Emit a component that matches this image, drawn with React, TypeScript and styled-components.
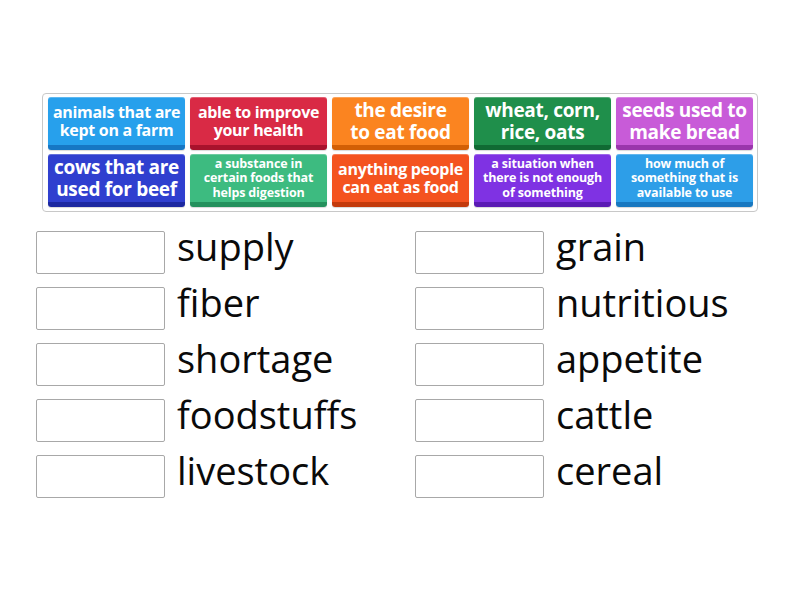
import React from "react";
import styled, { createGlobalStyle } from "styled-components";

const tiles = [
  { id: 1, lines: ["animals that are", "kept on a farm"], color: "#27a0ec", dark: "#1677c4", size: 16 },
  { id: 2, lines: ["able to improve", "your health"], color: "#d92a45", dark: "#a8122c", size: 16 },
  { id: 3, lines: ["the desire", "to eat food"], color: "#fb8420", dark: "#d25f05", size: 19 },
  { id: 4, lines: ["wheat, corn,", "rice, oats"], color: "#1f8f4b", dark: "#106a33", size: 19 },
  { id: 5, lines: ["seeds used to", "make bread"], color: "#c85bd8", dark: "#9a35ac", size: 19 },
  { id: 6, lines: ["cows that are", "used for beef"], color: "#2f3fcf", dark: "#1c28a0", size: 19 },
  { id: 7, lines: ["a substance in", "certain foods that", "helps digestion"], color: "#3dbb80", dark: "#24915d", size: 12.5 },
  { id: 8, lines: ["anything people", "can eat as food"], color: "#f4531f", dark: "#c33a0c", size: 16 },
  { id: 9, lines: ["a situation when", "there is not enough", "of something"], color: "#7f32e3", dark: "#5a1bb4", size: 12.5 },
  { id: 10, lines: ["how much of", "something that is", "available to use"], color: "#2d9ee8", dark: "#1878c0", size: 12.5 },
];

const words = [
  "supply",
  "grain",
  "fiber",
  "nutritious",
  "shortage",
  "appetite",
  "foodstuffs",
  "cattle",
  "livestock",
  "cereal",
];

const GlobalStyle = createGlobalStyle`
  body {
    margin: 0;
    background: #ffffff;
    font-family: "Open Sans", "Noto Sans", sans-serif;
  }
`;

const Page = styled.div`
  width: 800px;
  height: 600px;
  padding-top: 93px;
  box-sizing: border-box;
`;

const Bank = styled.div`
  width: 716px;
  margin: 0 auto;
  box-sizing: border-box;
  border: 1px solid #c8c8c8;
  border-radius: 4px;
  padding: 3px 5px 4px 5px;
  display: grid;
  grid-template-columns: repeat(5, 137px);
  grid-auto-rows: 53px;
  column-gap: 5px;
  row-gap: 4px;
`;

const Tile = styled.div<{ $color: string; $dark: string; $size: number }>`
  box-sizing: border-box;
  display: flex;
  flex-direction: column;
  align-items: center;
  justify-content: center;
  text-align: center;
  padding: 0 2px 4px;
  border-radius: 3px;
  background: linear-gradient(
    to bottom,
    ${({ $color }) => $color} 0%,
    ${({ $color }) => $color} 90%,
    ${({ $dark }) => $dark} 90%,
    ${({ $dark }) => $dark} 100%
  );
  box-shadow: inset 0 1px 0 rgba(255, 255, 255, 0.25), 0 1px 1px rgba(0, 0, 0, 0.15);
  color: #ffffff;
  font-weight: 700;
  font-size: ${({ $size }) => $size}px;
  line-height: ${({ $size }) => ($size < 14 ? 1.16 : 1.12)};
  letter-spacing: ${({ $size }) => ($size < 14 ? "-0.15px" : "-0.3px")};
  white-space: nowrap;
`;

const Line = styled.span`
  display: block;
`;

const Answers = styled.div`
  display: grid;
  grid-template-columns: 379px 379px;
  grid-auto-rows: 56px;
  padding: 19px 0 0 36px;
`;

const Row = styled.div`
  display: flex;
  align-items: center;
  height: 43px;
`;

const Slot = styled.div`
  width: 129px;
  height: 43px;
  box-sizing: border-box;
  border: 1px solid #a8a8a8;
  border-radius: 2px;
  background: #ffffff;
  flex-shrink: 0;
`;

const Word = styled.span`
  margin-left: 12px;
  font-size: 38px;
  color: #0a0a0a;
  line-height: 1;
  margin-top: -13px;
`;

export default function App() {
  return (
    <Page>
      <GlobalStyle />
      <Bank>
        {tiles.map((t) => (
          <Tile key={t.id} $color={t.color} $dark={t.dark} $size={t.size}>
            {t.lines.map((l) => (
              <Line key={l}>{l}</Line>
            ))}
          </Tile>
        ))}
      </Bank>
      <Answers>
        {words.map((w) => (
          <Row key={w}>
            <Slot />
            <Word>{w}</Word>
          </Row>
        ))}
      </Answers>
    </Page>
  );
}
